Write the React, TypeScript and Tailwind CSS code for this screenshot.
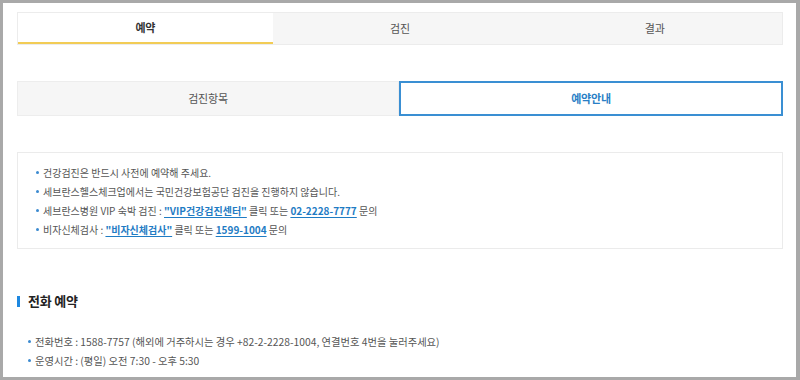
import React from "react";

const font = { fontFamily: '"Noto Sans CJK KR", "Noto Sans", sans-serif' };

function Bullet({ children, className = "" }: { children: React.ReactNode; className?: string }) {
  return (
    <li className={`flex items-center h-[19px] ${className}`}>
      <span className="w-[3px] h-[3px] rounded-full bg-[#3b8ad0] mr-[4px] shrink-0" />
      <span className="whitespace-nowrap">{children}</span>
    </li>
  );
}

function Link({ children }: { children: React.ReactNode }) {
  return <span className="text-[#1f7cc4] font-bold underline underline-offset-2">{children}</span>;
}

export default function App() {
  return (
    <div
      style={font}
      className="w-[800px] h-[380px] overflow-hidden bg-[#a9a9a9] pl-[3px] pt-[3px] pr-[4px] pb-[3px]"
    >
      <div className="w-full h-full bg-white pl-[14px] pr-[13px] pt-[9px]">
        {/* top tabs */}
        <div className="flex h-[33px] border border-[#ececec] text-[11px] tracking-[-0.2px]">
          <div className="flex-1 flex items-center justify-center bg-white border-b-2 border-[#f2cc55] font-bold text-[#333]">
            예약
          </div>
          <div className="flex-1 flex items-center justify-center bg-[#f6f6f6] text-[#555]">검진</div>
          <div className="flex-1 flex items-center justify-center bg-[#f6f6f6] text-[#555]">결과</div>
        </div>

        {/* sub tabs */}
        <div className="flex h-[35px] mt-[36px] text-[11px] tracking-[-0.2px]">
          <div className="flex-1 flex items-center justify-center bg-[#f6f6f6] border border-[#ededed] text-[#555]">
            검진항목
          </div>
          <div className="flex-1 flex items-center justify-center bg-white border-2 border-[#3a8fd3] text-[#2a7fc6] font-bold">
            예약안내
          </div>
        </div>

        {/* info box */}
        <div className="mt-[36px] h-[97px] border border-[#ebebeb] pt-[10px] pl-[18px] text-[10px] text-[#555]">
          <ul>
            <Bullet>건강검진은 반드시 사전에 예약해 주세요.</Bullet>
            <Bullet>세브란스헬스체크업에서는 국민건강보험공단 검진을 진행하지 않습니다.</Bullet>
            <Bullet>
              세브란스병원 VIP 숙박 검진 : <Link>"VIP건강검진센터"</Link> 클릭 또는 <Link>02-2228-7777</Link> 문의
            </Bullet>
            <Bullet>
              비자신체검사 : <Link>"비자신체검사"</Link> 클릭 또는 <Link>1599-1004</Link> 문의
            </Bullet>
          </ul>
        </div>

        {/* heading */}
        <div className="mt-[42px] flex items-center h-[20px]">
          <span className="w-[3px] h-[11px] bg-[#1e88e0] mr-[8px]" />
          <h2 className="text-[13px] font-bold text-[#222] tracking-[-0.2px]">전화 예약</h2>
        </div>

        {/* phone list */}
        <ul className="mt-[21px] pl-[11px] text-[10.3px] text-[#555]">
          <Bullet>전화번호 : 1588-7757 (해외에 거주하시는 경우 +82-2-2228-1004, 연결번호 4번을 눌러주세요)</Bullet>
          <Bullet>운영시간 : (평일) 오전 7:30 - 오후 5:30</Bullet>
        </ul>
      </div>
    </div>
  );
}
